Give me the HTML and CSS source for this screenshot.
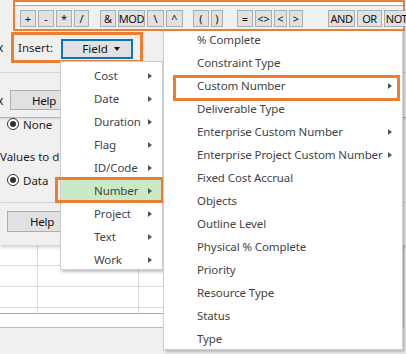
FILE: index.html
```html
<!DOCTYPE html>
<html>
<head>
<meta charset="utf-8">
<link rel="stylesheet" href="styles.css">
</head>
<body>
<div class="screen">
  <div class="front">
    <div class="formula">
      <div class="formula-text"></div>
      <div class="ops">
        <div class="grp">
          <span class="op w16">+</span><span class="op w16">-</span><span class="op w16">*</span><span class="op w15">/</span>
        </div>
        <div class="grp g2">
          <span class="op w16">&amp;</span><span class="op w27">MOD</span><span class="op w17">\</span><span class="op w17">^</span>
        </div>
        <div class="grp g3">
          <span class="op w16">(</span><span class="op w12">)</span>
        </div>
        <div class="grp g4">
          <span class="op w16">=</span><span class="op w17">&lt;&gt;</span><span class="op w13">&lt;</span><span class="op w14">&gt;</span>
        </div>
        <div class="grp g5">
          <span class="op w27">AND</span><span class="op w25">OR</span><span class="op w25">NOT</span>
        </div>
      </div>
    </div>
    <div class="insert-row">
      <span class="cut"><span class="cut-glyph">x</span></span>
      <div class="insert-box">
        <span class="insert-label">Insert:</span>
        <span class="field-btn">Field <span class="caret"></span></span>
      </div>
    </div>
    <div class="divider"></div>
    <div class="help-row">
      <span class="cut small"><span class="cut-glyph">x</span></span>
      <span class="help-btn">Help</span>
    </div>
  </div>

  <div class="back">
    <div class="radio-row first"><span class="radio"></span><span>None</span></div>
    <div class="values-label">Values to display:</div>
    <div class="radio-row data"><span class="radio"></span><span>Data</span></div>
    <div class="divider back-div"></div>
    <div class="help-row back-help"><span class="help-btn">Help</span></div>
  </div>

  <div class="sheet">
    <div class="grid">
      <span></span><span></span><span></span>
      <span></span><span></span><span></span>
      <span></span><span></span><span></span>
      <span></span><span></span><span></span>
    </div>
    <div class="sheet-foot"></div>
  </div>

  <div class="menu m1">
    <div class="item"><span>Cost</span><i class="arrow"></i></div>
    <div class="item"><span>Date</span><i class="arrow"></i></div>
    <div class="item"><span>Duration</span><i class="arrow"></i></div>
    <div class="item"><span>Flag</span><i class="arrow"></i></div>
    <div class="item"><span>ID/Code</span><i class="arrow"></i></div>
    <div class="item active"><span>Number</span><i class="arrow"></i></div>
    <div class="item"><span>Project</span><i class="arrow"></i></div>
    <div class="item"><span>Text</span><i class="arrow"></i></div>
    <div class="item"><span>Work</span><i class="arrow"></i></div>
    <div class="mark mark-number"></div>
  </div>

  <div class="menu m2">
    <div class="item"><span>% Complete</span></div>
    <div class="item"><span>Constraint Type</span></div>
    <div class="item"><span>Custom Number</span><i class="arrow"></i></div>
    <div class="item"><span>Deliverable Type</span></div>
    <div class="item"><span>Enterprise Custom Number</span><i class="arrow"></i></div>
    <div class="item"><span>Enterprise Project Custom Number</span><i class="arrow"></i></div>
    <div class="item"><span>Fixed Cost Accrual</span></div>
    <div class="item"><span>Objects</span></div>
    <div class="item"><span>Outline Level</span></div>
    <div class="item"><span>Physical % Complete</span></div>
    <div class="item"><span>Priority</span></div>
    <div class="item"><span>Resource Type</span></div>
    <div class="item"><span>Status</span></div>
    <div class="item"><span>Type</span></div>
    <div class="mark mark-custom"></div>
  </div>
</div>
</body>
</html>
```

FILE: styles.css
```css
* { box-sizing: border-box; }
html, body { margin: 0; padding: 0; }
body {
  width: 406px;
  height: 354px;
  overflow: hidden;
  background: #f0f0f0;
  font-family: "Noto Sans", "Open Sans", sans-serif;
  font-size: 11.5px;
  color: #1e1e1e;
}
.screen {
  position: relative;
  width: 406px;
  height: 354px;
  overflow: hidden;
  background: #f0f0f0;
}

/* ---------- front dialog ---------- */
.front {
  position: relative;
  height: 118px;
  background: #f0f0f0;
  border-bottom: 1px solid #b9b9b9;
  padding-bottom: 7px;
  display: flex;
  flex-direction: column;
}
.formula {
  position: relative;
  z-index: 10;
  margin-left: 13px;
  width: 392px;
  height: 31px;
  border: 2px solid #ed7d31;
  background: #f0f0f0;
}
.formula-text {
  height: 4px;
  background: #fff;
  border-bottom: 1px solid #a8a8a8;
}
.ops {
  display: flex;
  padding-top: 4px;
  padding-left: 5px;
}
.grp { display: flex; gap: 2px; }
.g2 { margin-left: 11px; }
.g3 { margin-left: 10px; }
.g4 { margin-left: 14px; }
.g5 { margin-left: 25px; }
.op {
  height: 17px;
  background: #e1e1e1;
  border: 1px solid #adadad;
  display: flex;
  align-items: center;
  justify-content: center;
  font-size: 11px;
  line-height: 1;
  color: #111;
  overflow: hidden;
  white-space: nowrap;
}
.w12 { width: 12px; }
.w13 { width: 13px; }
.w14 { width: 14px; }
.w15 { width: 15px; }
.w16 { width: 16px; }
.w17 { width: 17px; }
.w25 { width: 25px; }
.w27 { width: 27px; }
.op.w27, .op.w25 { font-size: 11px; letter-spacing: -0.4px; }

.insert-row {
  display: flex;
  margin-top: 1px;
  height: 31px;
}
.cut {
  width: 11px;
  overflow: hidden;
  position: relative;
  display: flex;
  align-items: center;
}
.cut-glyph { margin-left: -3px; font-size: 12px; color: #222; }
.insert-box {
  width: 132px;
  height: 31px;
  border: 3px solid #ed7d31;
  display: flex;
  align-items: center;
  padding-left: 4px;
}
.insert-label { width: 43px; color: #1e1e1e; }
.field-btn {
  width: 72px;
  height: 20px;
  margin-top: 2px;
  border: 2px solid #0a72c8;
  background: #e1e1e1;
  display: flex;
  align-items: center;
  justify-content: center;
  gap: 6px;
  padding-left: 8px;
  color: #111;
}
.caret {
  width: 0; height: 0;
  border-left: 3.5px solid transparent;
  border-right: 3.5px solid transparent;
  border-top: 4px solid #111;
}
.divider {
  margin-top: 9px;
  height: 1px;
  background: #d5d5d5;
}
.help-row {
  display: flex;
  margin-top: 17px;
  height: 20px;
}
.cut.small { width: 10px; }
.help-btn {
  width: 76px;
  height: 20px;
  background: #e1e1e1;
  border: 1px solid #adadad;
  display: flex;
  align-items: center;
  padding-left: 21px;
  color: #111;
  letter-spacing: -0.2px;
}

/* ---------- back dialog ---------- */
.back {
  position: relative;
  height: 127px;
  overflow: hidden;
  background: #f0f0f0;
  display: flex;
  flex-direction: column;
  box-shadow: 0 2px 4px rgba(0,0,0,.22), inset 0 2px 2px -1px rgba(0,0,0,.12);
}
.radio-row {
  display: flex;
  align-items: center;
  gap: 4px;
  height: 14px;
  padding-left: 7px;
  color: #1e1e1e;
}
.radio-row.first { margin-top: -1px; }
.radio-row.data { margin-top: 9px; height: 14px; }
.radio {
  width: 12px; height: 12px;
  border: 1px solid #333;
  border-radius: 50%;
  background: #fff;
  display: flex;
  align-items: center;
  justify-content: center;
}
.radio::after {
  content: "";
  width: 6px; height: 6px;
  border-radius: 50%;
  background: #333;
}
.values-label {
  margin-top: 19px;
  height: 14px;
  line-height: 14px;
  white-space: nowrap;
  color: #1e1e1e;
}
.back-div { margin-top: 15px; }
.back-help { margin-top: 8px; height: 21px; padding-left: 7px; }
.back-help .help-btn { height: 21px; width: 78px; padding-left: 22px; }

/* ---------- sheet ---------- */
.sheet {
  background: #fff;
  width: 404px;
  border-right: 1px solid #c8c8c8;
}
.grid {
  display: grid;
  grid-template-columns: 38px 101px 1fr;
  grid-template-rows: 21px 21px 21px 5px;
}
.grid span {
  border-right: 1px solid #dcdcdc;
  border-bottom: 1px solid #dcdcdc;
}
.grid span:nth-child(3n) { border-right: none; }
.grid span:nth-last-child(-n+3) { border-bottom: none; }
.sheet-foot {
  height: 15px;
  border-top: 1px solid #a9a9a9;
  border-bottom: 1px solid #bdbdbd;
}

/* ---------- menus ---------- */
.menu {
  position: absolute;
  background: #fff;
  border: 1px solid #cfcfcf;
  box-shadow: 2px 2px 3px rgba(0,0,0,.25);
  color: #444;
  font-size: 11.5px;
  letter-spacing: -0.1px;
}
.m1 {
  left: 60px;
  top: 61px;
  width: 103px;
  height: 209px;
  padding-top: 2px;
  z-index: 5;
}
.m2 {
  left: 163px;
  top: 27px;
  width: 240px;
  height: 323px;
  z-index: 6;
}
.item {
  height: 23px;
  display: flex;
  align-items: center;
  justify-content: space-between;
  white-space: nowrap;
}
.m1 .item { padding: 0 10px 0 33px; }
.m2 .item { padding: 0 10px 0 33px; }
.m1 .item.active { background: #c9e9c8; }
.arrow {
  width: 0; height: 0;
  border-top: 3.5px solid transparent;
  border-bottom: 3.5px solid transparent;
  border-left: 4px solid #555;
}
.mark {
  position: absolute;
  border: 3px solid #ed7d31;
  pointer-events: none;
}
.mark-number {
  left: -6px;
  top: 115px;
  width: 109px;
  height: 26px;
}
.mark-custom {
  left: 9px;
  top: 47px;
  width: 227px;
  height: 26px;
}
```
